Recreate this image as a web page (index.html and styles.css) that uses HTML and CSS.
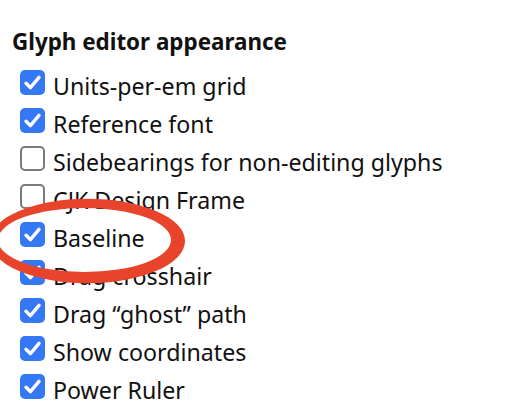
FILE: index.html
```html
<!DOCTYPE html>
<html>
<head>
<meta charset="utf-8">
<link rel="stylesheet" href="styles.css">
</head>
<body>
<div class="panel">
  <h2 class="title">Glyph editor appearance</h2>
  <div class="list">
    <label class="row"><span class="box on"><svg viewBox="0 0 25 25"><path d="M6 13.2 L10.4 17.6 L19 7.4" /></svg></span><span class="text">Units-per-em grid</span></label>
    <label class="row"><span class="box on"><svg viewBox="0 0 25 25"><path d="M6 13.2 L10.4 17.6 L19 7.4" /></svg></span><span class="text">Reference font</span></label>
    <label class="row"><span class="box off"></span><span class="text">Sidebearings for non-editing glyphs</span></label>
    <label class="row"><span class="box off"></span><span class="text">CJK Design Frame</span></label>
    <label class="row"><span class="box on"><svg viewBox="0 0 25 25"><path d="M6 13.2 L10.4 17.6 L19 7.4" /></svg></span><span class="text">Baseline</span></label>
    <label class="row"><span class="box on"><svg viewBox="0 0 25 25"><path d="M6 13.2 L10.4 17.6 L19 7.4" /></svg></span><span class="text">Drag crosshair</span></label>
    <label class="row"><span class="box on"><svg viewBox="0 0 25 25"><path d="M6 13.2 L10.4 17.6 L19 7.4" /></svg></span><span class="text">Drag “ghost” path</span></label>
    <label class="row"><span class="box on"><svg viewBox="0 0 25 25"><path d="M6 13.2 L10.4 17.6 L19 7.4" /></svg></span><span class="text">Show coordinates</span></label>
    <label class="row"><span class="box on"><svg viewBox="0 0 25 25"><path d="M6 13.2 L10.4 17.6 L19 7.4" /></svg></span><span class="text">Power Ruler</span></label>
  </div>
</div>
<svg class="annotation" width="506" height="418" viewBox="0 0 506 418">
  <path fill="#e8432b" fill-rule="evenodd" d="M-10 241 A97 42 0 1 0 185 241 A97 42 0 1 0 -10 241 Z M-2 240 A86.5 32 0 1 0 171 240 A86.5 32 0 1 0 -2 240 Z"/>
</svg>
</body>
</html>
```
FILE: styles.css
```css
html, body {
  margin: 0;
  padding: 0;
  background: #ffffff;
}
body {
  width: 506px;
  height: 418px;
  overflow: hidden;
  position: relative;
  font-family: "Noto Sans", "Lato", sans-serif;
  color: #111111;
}
.panel {
  padding: 27px 0 0 12px;
}
.title {
  margin: 0;
  font-size: 22.4px;
  line-height: 30px;
  font-weight: 700;
  color: #111111;
}
.list {
  margin-top: 10px;
  padding-left: 8px;
  display: flex;
  flex-direction: column;
}
.row {
  display: flex;
  align-items: flex-start;
  height: 38px;
  gap: 8px;
}
.box {
  width: 25px;
  height: 25px;
  margin-top: 2.5px;
  box-sizing: border-box;
  border-radius: 5px;
  flex: none;
}
.box.on {
  background: #3478f6;
}
.box.on svg {
  display: block;
  width: 25px;
  height: 25px;
}
.box.on path {
  fill: none;
  stroke: #ffffff;
  stroke-width: 3.4;
  stroke-linecap: round;
  stroke-linejoin: round;
}
.box.off {
  border: 2px solid #7a7a7a;
  background: #ffffff;
}
.text {
  font-size: 23.2px;
  line-height: 39px;
  color: #111111;
  white-space: nowrap;
}
.annotation {
  position: absolute;
  left: 0;
  top: 0;
  pointer-events: none;
}
```
